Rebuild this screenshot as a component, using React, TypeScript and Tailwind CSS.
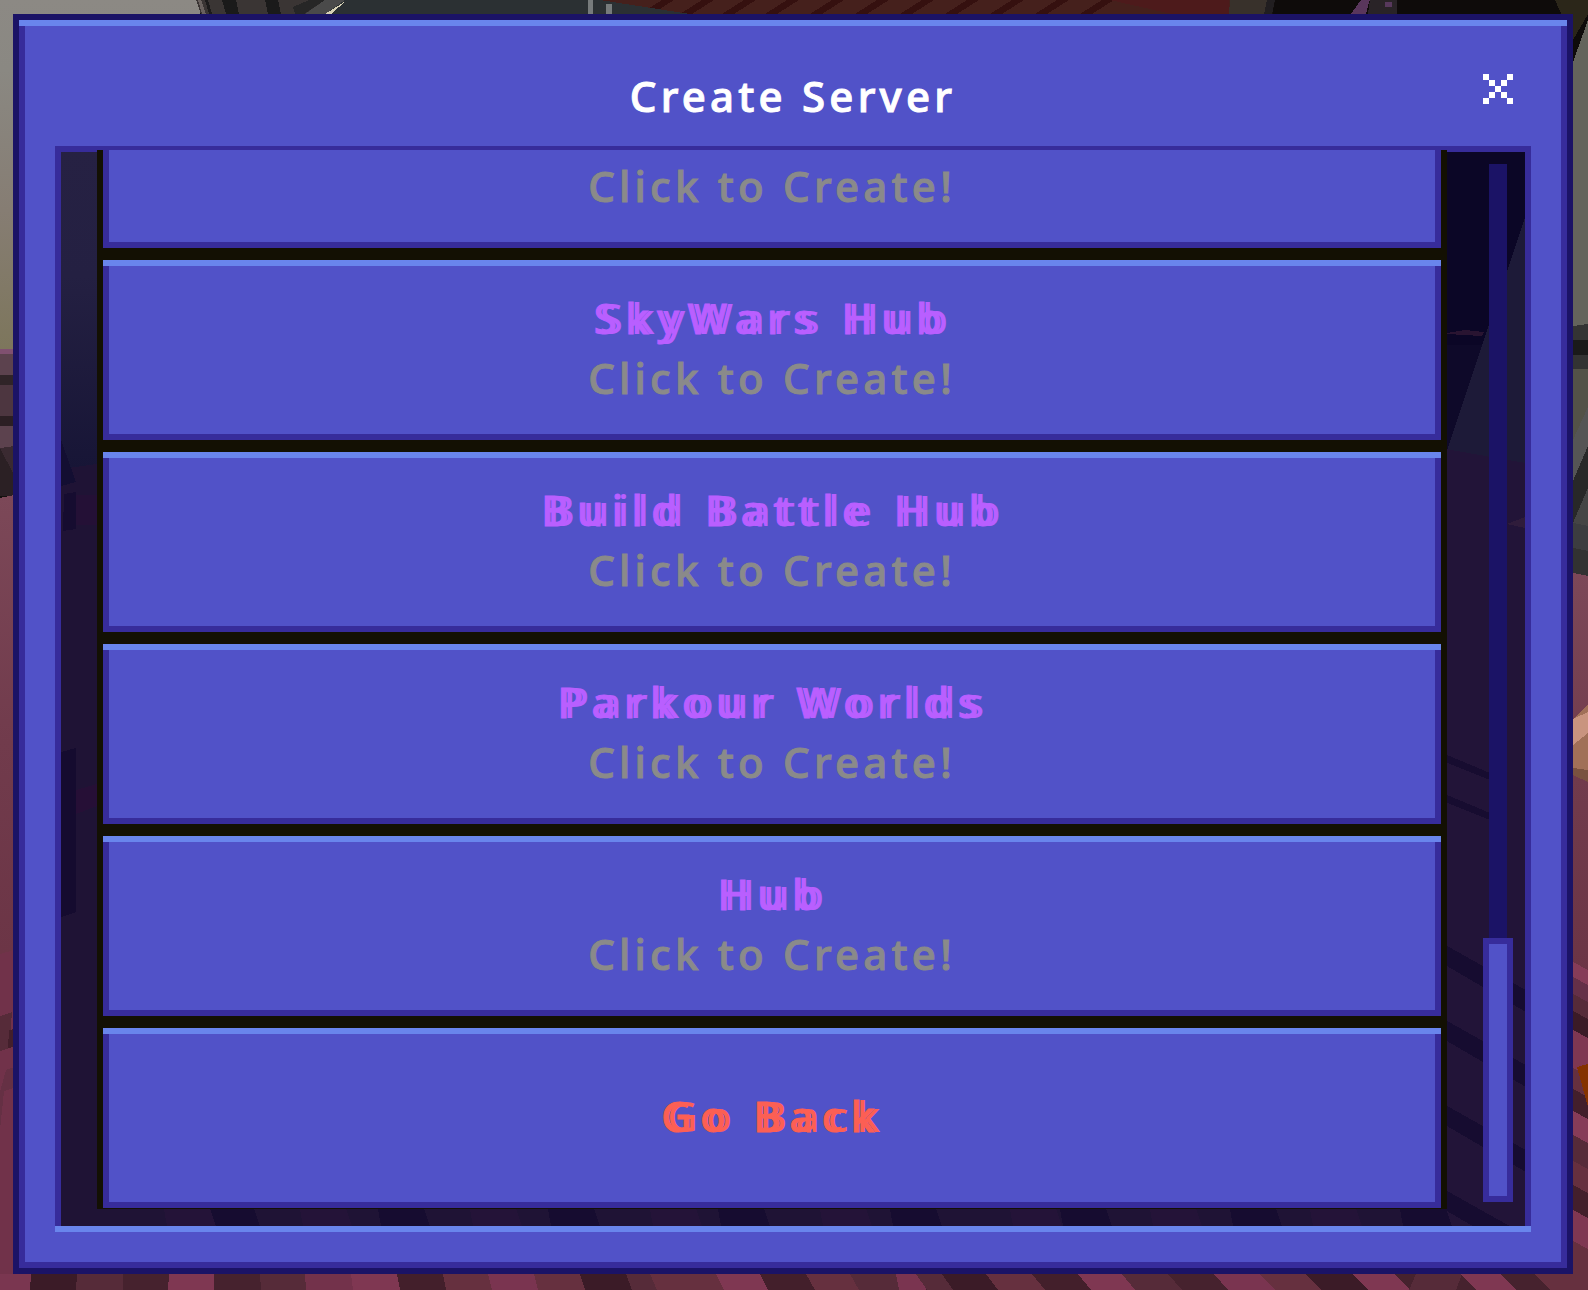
import clsx from "clsx";

type ServerOption = {
  id: string;
  name?: string;
};

const servers: ServerOption[] = [
  { id: "unnamed" },
  { id: "skywars", name: "SkyWars Hub" },
  { id: "build-battle", name: "Build Battle Hub" },
  { id: "parkour", name: "Parkour Worlds" },
  { id: "hub", name: "Hub" },
];

// x, width, slant and fill of each plank along the bottom of the world
const planks: [number, number, number, string][] = [
  [0, 31, 0, "#7a3650"],
  [31, 46, 0, "#3b1b27"],
  [77, 46, 0, "#562b39"],
  [123, 46, 1, "#46222e"],
  [169, 46, 0, "#7f3752"],
  [214, 46, 1, "#46222e"],
  [260, 46, 2, "#562b39"],
  [305, 46, 2, "#73324b"],
  [351, 46, 3, "#7f3752"],
  [397, 46, 4, "#431f2b"],
  [443, 46, 4, "#66303f"],
  [488, 46, 5, "#7a3450"],
  [534, 46, 5, "#66303f"],
  [580, 46, 6, "#3b1b27"],
  [626, 30, 7, "#562b39"],
  [650, 66, 8, "#66303f"],
  [716, 44, 9, "#7f3752"],
  [760, 46, 9, "#431f2b"],
  [806, 46, 10, "#66303f"],
  [850, 48, 10, "#562b39"],
  [896, 26, 4, "#7a3450"],
  [916, 30, 12, "#562b39"],
  [942, 44, 12, "#3b1b27"],
  [986, 46, 13, "#66303f"],
  [1032, 46, 14, "#431f2b"],
  [1078, 44, 14, "#7f3752"],
  [1122, 46, 14, "#562b39"],
  [1168, 46, 15, "#46222e"],
  [1214, 46, 15, "#7a3450"],
  [1260, 46, 16, "#66303f"],
  [1306, 46, 16, "#3b1b27"],
  [1352, 42, 17, "#7f3752"],
  [1394, 22, 17, "#46222e"],
  [1416, 46, -6, "#562b39"],
  [1460, 40, 17, "#7f3752"],
  [1500, 34, 18, "#46222e"],
  [1534, 54, 18, "#66303f"],
];

const rightPlanks: [number, string][] = [
  [962, "#863c58"],
  [977, "#653048"],
  [994, "#562b39"],
  [1011, "#3b1b27"],
  [1030, "#7f3752"],
  [1068, "#66303f"],
  [1089, "#431f2b"],
  [1111, "#863c58"],
  [1135, "#562b39"],
  [1161, "#66303f"],
  [1185, "#431f2b"],
  [1210, "#7f3752"],
  [1241, "#66303f"],
];

const World = () => (
  <svg
    className="absolute inset-0 h-full w-full"
    viewBox="0 0 1588 1290"
    preserveAspectRatio="none"
    shapeRendering="crispEdges"
    aria-hidden="true"
  >
    <defs>
      <linearGradient id="wall" x1="0" y1="0" x2="0" y2="1">
        <stop offset="0" stopColor="#8c8984" />
        <stop offset="0.2" stopColor="#8a8882" />
        <stop offset="0.6" stopColor="#867d73" />
        <stop offset="1" stopColor="#7d765c" />
      </linearGradient>
      <linearGradient id="ground" x1="0" y1="0" x2="0" y2="1">
        <stop offset="0" stopColor="#7c4858" />
        <stop offset="0.5" stopColor="#713b4c" />
        <stop offset="1" stopColor="#6b3445" />
      </linearGradient>
    </defs>
    <rect width="1588" height="1290" fill="#15110f" />

    {/* Left wall, fence and floor */}
    <rect width="200" height="350" fill="url(#wall)" />
    <rect y="349" width="14" height="5" fill="#805070" />
    <rect y="354" width="14" height="142" fill="#5c424e" />
    <rect y="375" width="14" height="10" fill="#302428" />
    <rect y="385" width="14" height="31" fill="#4d3640" />
    <rect y="416" width="14" height="10" fill="#2c1f24" />
    <path d="M0 448L14 446V496H0Z" fill="#3a2a31" />
    <path d="M0 448L14 475V496H0Z" fill="#2b2024" />
    <path d="M0 498L14 495V990H0Z" fill="url(#ground)" />
    <path d="M0 954L14 950V1290H0Z" fill="#71324a" />
    <path d="M0 1016L12 1012L9 1048L0 1051Z" fill="#562b39" />
    <path d="M9 1030L14 1029V1047L8 1048Z" fill="#431f2b" />
    <path d="M6 1070L14 1067V1088L4 1091L0 1130V1092Z" fill="#653044" />

    {/* Top strip */}
    <path d="M196 0H345L325 14H201Z" fill="#3a3534" />
    <path d="M198 0H201L206 14H202Z" fill="#6a625f" />
    <path d="M205 0H208L212 14H209Z" fill="#1c1b1b" />
    <path d="M222 0H236L239 14H226Z" fill="#1a1a1a" />
    <path d="M265 0H278L281 14H268Z" fill="#1a1a1a" />
    <path d="M293 7L309 0H325L304 14H295Z" fill="#262626" />
    <path d="M325 0H345L325 14H305Z" fill="#4a4a4a" />
    <path d="M345 0H600L690 14H325Z" fill="#2b3033" />
    <path d="M341 4L346 1L331 14H325Z" fill="#d6d0b4" />
    <path d="M588 0H593V14H588ZM606 4H612V14H606Z" fill="#777b7c" />
    <path d="M600 0H1230V14H690Z" fill="#45201c" />
    {[640, 680, 722, 765, 810, 855, 900, 945, 990, 1035, 1080].map((x) => (
      <path key={x} d={`M${x + 22} 0H${x + 34}L${x + 12} 14H${x}Z`} fill="#35100f" />
    ))}
    <path d="M600 0L690 14H600Z" fill="#2b3033" />
    <path d="M606 4H612V14H606Z" fill="#777b7c" />
    <path d="M1110 0H1229V14H1172Z" fill="#4d1a1b" />
    <path d="M1230 0H1267L1264 14H1229Z" fill="#38312b" />
    <path d="M1267 0H1275L1272 14H1264Z" fill="#211e20" />
    <path d="M1275 0H1588V60H1264Z" fill="#0e0b0a" />
    <path d="M1361 0H1370L1368 6L1366 14H1351Z" fill="#59365c" />
    <path d="M1370 0H1397V14H1368Z" fill="#292327" />
    <path d="M1385 2H1392V7H1385Z" fill="#57385c" />
    <path d="M1555 0H1588V14L1573 40Z" fill="#2b2619" />

    {/* Right wall, blocks and floor */}
    <path d="M1588 20L1573 62V330H1588Z" fill="#64645c" />
    <path d="M1573 326L1588 324V340H1573Z" fill="#343434" />
    <rect x="1573" y="340" width="15" height="15" fill="#1a1a1a" />
    <rect x="1573" y="355" width="15" height="15" fill="#333333" />
    <path d="M1573 369H1588V410L1573 440Z" fill="#535248" />
    <path d="M1588 407V446L1573 481V440Z" fill="#555555" />
    <path d="M1588 446V488L1573 523V481Z" fill="#282828" />
    <path d="M1588 488V528L1573 523Z" fill="#454545" />
    <path d="M1573 523L1588 526V551L1573 548Z" fill="#3c3d40" />
    <path d="M1573 548L1588 551V576H1573Z" fill="#323232" />
    <path d="M1573 573L1588 576V980H1573Z" fill="url(#ground)" />
    <path d="M1573 719L1588 705V782L1573 775Z" fill="#a17058" />
    <path d="M1573 719L1588 712V733L1573 745Z" fill="#c9947f" />
    <path d="M1573 768L1588 770V782L1573 775Z" fill="#7a5240" />
    {rightPlanks.map(([y, fill]) => (
      <path key={y} d={`M1573 ${y}L1588 ${y + 8}V1290H1573Z`} fill={fill} />
    ))}
    <path d="M1577 1067L1588 1064V1107Z" fill="#843200" />

    <rect y="1274" width="1588" height="16" fill="#46222e" />
    {planks.map(([x, width, slant, fill]) => (
      <path
        key={x}
        d={`M${x} 1274h${width}l${slant} 16h${-width - 1}Z`}
        fill={fill}
      />
    ))}
  </svg>
);

// The same world seen through the tinted glass of the list well
const TintedWorld = () => (
  <svg
    className="absolute inset-0 h-full w-full"
    viewBox="55 146 1476 1086"
    preserveAspectRatio="none"
    shapeRendering="crispEdges"
    aria-hidden="true"
  >
    <defs>
      <linearGradient id="tintWall" x1="0" y1="0" x2="0" y2="1">
        <stop offset="0" stopColor="#262143" />
        <stop offset="0.4" stopColor="#242042" />
        <stop offset="1" stopColor="#171536" />
      </linearGradient>
    </defs>
    <rect x="55" y="146" width="1476" height="1086" fill="#1f1335" />
    <path d="M55 146H110V462L55 470Z" fill="url(#tintWall)" />
    <path d="M61 440L76 482L61 486Z" fill="#130e32" />
    <path d="M64 494L76 492V529L63 531Z" fill="#160c30" />
    <path d="M76 495H97V525H76Z" fill="#241036" />
    <path d="M61 752L76 748V912L61 917Z" fill="#150b2f" />
    <path d="M76 790L97 784V806L76 814Z" fill="#260f36" />

    <rect x="1440" y="146" width="91" height="345" fill="#0b0626" />
    <path d="M1440 345H1490V450H1440Z" fill="#0e0929" />
    <path d="M1447 333L1465 330L1484 332L1482 336L1447 334Z" fill="#291431" />
    <path d="M1531 200L1447 450L1531 464Z" fill="#1d1a38" />
    <path d="M1440 448L1531 464V1232H1440Z" fill="#221438" />
    <path d="M1507 524L1525 517V528Z" fill="#2f1c3b" />
    {[755, 795].map((y) => (
      <path key={y} d={`M1440 ${y - 3}L1490 ${y + 18}V${y + 25}L1440 ${y + 5}Z`} fill="#170c30" />
    ))}
    {[945, 1020, 1105, 1190].map((y) => (
      <path key={y} d={`M1440 ${y - 3}L1531 ${y + 48}V${y + 70}L1440 ${y + 17}Z`} fill="#160c30" />
    ))}
    {[208, 378, 548, 718, 890, 1060, 1230, 1400].map((x) => (
      <path key={x} d={`M${x} 1209h46l8 23h-50Z`} fill="#160c30" />
    ))}
    {[164, 300, 470, 650, 820, 1010, 1150, 1310].map((x) => (
      <path key={x} d={`M${x} 1209h46l8 23h-50Z`} fill="#241338" />
    ))}
  </svg>
);

const CloseIcon = () => (
  <svg viewBox="0 0 5 5" className="size-[30px]" fill="currentColor" shapeRendering="crispEdges" aria-hidden="true">
    <path d="M0 0h1v1h-1zM4 0h1v1h-1zM1 1h1v1h-1zM3 1h1v1h-1zM2 2h1v1h-1zM1 3h1v1h-1zM3 3h1v1h-1zM0 4h1v1h-1zM4 4h1v1h-1z" />
  </svg>
);

type MenuButtonProps = {
  title?: string;
  subtitle?: string;
  danger?: boolean;
};

const MenuButton = ({ title, subtitle, danger }: MenuButtonProps) => (
  <button
    type="button"
    className="flex h-[180px] w-full shrink-0 flex-col items-center justify-center bg-[#5152c8] pb-1 text-[42px] leading-[60px] font-medium whitespace-nowrap shadow-[inset_0_6px_#6985ec,inset_6px_0_#372c9b,inset_-6px_0_#372c9b,inset_0_-6px_#372c9b] [-webkit-text-stroke:1px]"
  >
    <span
      className={clsx(
        "min-h-[60px] tracking-[0.2em]",
        danger
          ? "text-[#fc5f54] [text-shadow:6px_0_#fc5f54]"
          : "text-[#b95fff] [text-shadow:6px_0_#b95fff]"
      )}
    >
      {title}
    </span>
    {subtitle && <span className="tracking-widest text-[#8a8a8a]">{subtitle}</span>}
  </button>
);

export default function App() {
  return (
    <main className="relative flex h-screen flex-col overflow-hidden px-[13px] pt-[14px] pb-4 font-['Noto_Sans',sans-serif]">
      <World />

      {/* Dialog */}
      <section
        aria-labelledby="dialog-title"
        className="relative mr-[2px] flex min-h-0 flex-1 flex-col border-6 border-[#1b1366] bg-[#5152c8] px-9 pt-1.5 pb-9 shadow-[inset_0_6px_#6985ec,inset_6px_0_#372c9b,inset_-6px_0_#372c9b,inset_0_-6px_#372c9b]"
      >
        <header className="grid h-[120px] shrink-0 grid-cols-[1fr_auto_1fr] items-center">
          <h1
            id="dialog-title"
            className="col-start-2 pt-5 text-[42px] leading-[60px] font-medium tracking-widest text-white [-webkit-text-stroke:1px]"
          >
            Create Server
          </h1>
          <button type="button" aria-label="Close" className="mr-[18px] justify-self-end pt-1.5 text-white">
            <CloseIcon />
          </button>
        </header>

        {/* Server list */}
        <div className="relative flex min-h-0 flex-1">
          <TintedWorld />
          <div className="relative flex min-w-0 flex-1 gap-9 pt-1 pr-[18px] pb-[23px] pl-[42px] shadow-[inset_0_-6px_#6985ec,inset_0_6px_#372c9b,inset_6px_0_#372c9b,inset_-6px_0_#372c9b]">
            <div className="flex min-w-0 flex-1 flex-col justify-end gap-3 overflow-hidden bg-[#131003] px-1.5 pb-px">
              {servers.map((server) => (
                <MenuButton key={server.id} title={server.name} subtitle="Click to Create!" />
              ))}
              <MenuButton title="Go Back" danger />
            </div>

            {/* Scrollbar */}
            <div className="mt-[14px] mb-[7px] flex w-[30px] shrink-0 flex-col items-center">
              <div className="w-[18px] flex-1 bg-[#1b1366]" />
              <div className="h-[264px] w-full border-6 border-[#372c9b] bg-[#5152c8]" />
            </div>
          </div>
        </div>
      </section>
    </main>
  );
}
